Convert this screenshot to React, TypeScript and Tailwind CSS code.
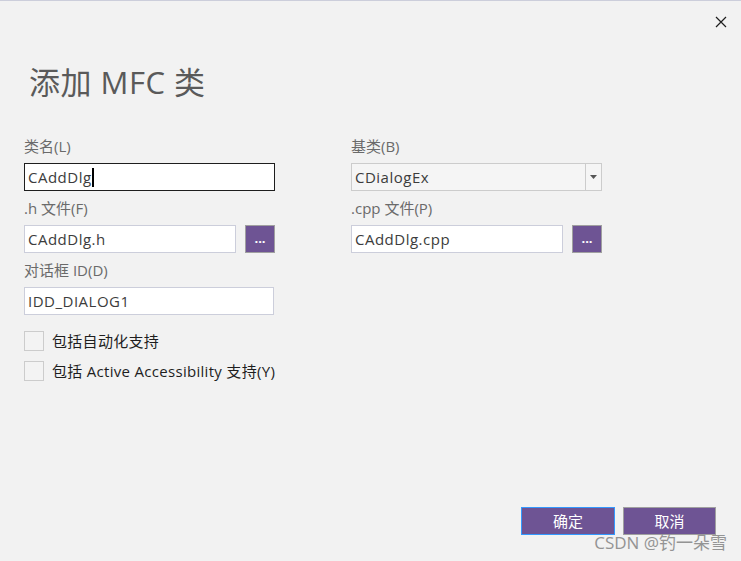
import React from 'react';

const font = { fontFamily: '"Open Sans", "Noto Sans CJK SC", sans-serif' };

function Label({ text }: { text: string }) {
  return <div className="h-[34px] flex items-center text-[15px] text-[#6a6a6a]">{text}</div>;
}

function TextBox({ value, focused, width = 'w-[251px]' }: { value: string; focused?: boolean; width?: string }) {
  return (
    <div
      className={`${width} h-[28px] bg-white flex items-center pl-[3px] text-[15px] tracking-[0.5px] text-[#3c3c3c] border ${
        focused ? 'border-[#1e1e1e]' : 'border-[#cccedb]'
      }`}
    >
      <span>{value}</span>
      {focused && <span className="w-[2px] h-[19px] bg-black"></span>}
    </div>
  );
}

function BrowseRow({ value }: { value: string }) {
  return (
    <div className="flex gap-[9px]">
      <TextBox value={value} width="w-[212px]" />
      <button className="w-[30px] h-[28px] bg-[#6e5494] border border-[#a0a0a0] text-white text-[13px] font-bold leading-none pb-[2px]">
        ...
      </button>
    </div>
  );
}

function Check({ text }: { text: string }) {
  return (
    <div className="h-[20px] flex items-center gap-[8px] whitespace-nowrap">
      <div className="w-[20px] h-[20px] shrink-0 border border-[#cccccc] bg-[#f3f3f3]"></div>
      <span className="text-[15px] leading-[20px] tracking-[0.3px] text-[#1e1e1e]">{text}</span>
    </div>
  );
}

export default function App() {
  return (
    <div className="w-[741px] h-[561px] bg-[#f2f2f2] border-t border-[#cccedb] relative flex flex-col" style={font}>
      {/* Close */}
      <button className="absolute top-[14px] right-[13px] w-[14px] h-[14px] flex items-center justify-center">
        <svg width="12" height="12" viewBox="0 0 12 12">
          <path d="M1 1 L11 11 M11 1 L1 11" stroke="#1e1e1e" strokeWidth="1.2" />
        </svg>
      </button>

      <h1 className="pt-[59px] pl-[29px] text-[31px] tracking-[0.5px] leading-[44px] text-[#5a5a5a] h-[128px]">添加 MFC 类</h1>

      <div className="flex pl-[24px] gap-[76px]">
        {/* Left column */}
        <div className="flex flex-col w-[251px]">
          <Label text="类名(L)" />
          <TextBox value="CAddDlg" focused />
          <Label text=".h 文件(F)" />
          <BrowseRow value="CAddDlg.h" />
          <Label text="对话框 ID(D)" />
          <TextBox value="IDD_DIALOG1" width="w-[250px]" />
          <div className="flex flex-col gap-[10px] mt-[16px]">
            <Check text="包括自动化支持" />
            <Check text="包括 Active Accessibility 支持(Y)" />
          </div>
        </div>

        {/* Right column */}
        <div className="flex flex-col w-[251px]">
          <Label text="基类(B)" />
          <div className="w-[251px] h-[28px] bg-[#f5f5f5] border border-[#cccccc] flex">
            <div className="flex-1 flex items-center pl-[3px] text-[15px] tracking-[0.5px] text-[#3c3c3c]">CDialogEx</div>
            <div className="w-[16px] border-l border-[#cccccc] flex items-center justify-center">
              <svg width="7" height="4" viewBox="0 0 7 4">
                <path d="M0 0 H7 L3.5 4 Z" fill="#555555" />
              </svg>
            </div>
          </div>
          <Label text=".cpp 文件(P)" />
          <BrowseRow value="CAddDlg.cpp" />
        </div>
      </div>

      <div className="mt-auto mb-[26px] flex justify-end gap-[8px] pr-[25px]">
        <button className="w-[94px] h-[28px] bg-[#6e5494] border border-[#3399ff] text-white text-[15px]">确定</button>
        <button className="w-[93px] h-[28px] bg-[#6e5494] border border-[#a0a0a0] text-white text-[15px]">取消</button>
      </div>

      <div className="absolute right-[14px] bottom-[6px] text-[17px] text-[#8a8a8a] opacity-90">CSDN @钓一朵雪</div>
    </div>
  );
}
